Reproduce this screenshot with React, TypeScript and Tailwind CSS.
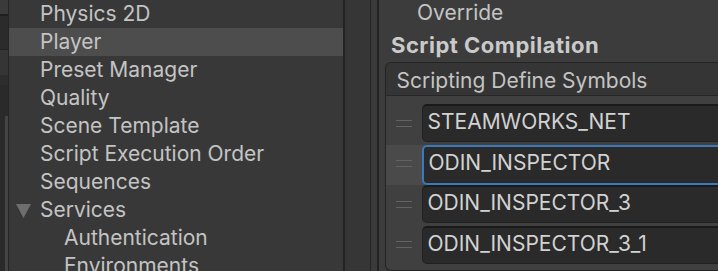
import React from "react";

const leftItems: { label: string; indent?: boolean; selected?: boolean; arrow?: boolean }[] = [
  { label: "Physics 2D" },
  { label: "Player", selected: true },
  { label: "Preset Manager" },
  { label: "Quality" },
  { label: "Scene Template" },
  { label: "Script Execution Order" },
  { label: "Sequences" },
  { label: "Services", arrow: true },
  { label: "Authentication", indent: true },
  { label: "Environments", indent: true },
];

const symbols = ["STEAMWORKS_NET", "ODIN_INSPECTOR", "ODIN_INSPECTOR_3", "ODIN_INSPECTOR_3_1"];

export default function App() {
  return (
    <div
      className="w-[718px] h-[271px] flex overflow-hidden bg-[#383838] text-[21px]"
      style={{ fontFamily: "Inter, 'Noto Sans', sans-serif" }}
    >
      {/* left remnant strip */}
      <div className="w-[8px] h-full flex flex-col shrink-0">
        <div className="h-[14px] bg-[#3a3a3a]" />
        <div className="h-[2px] bg-[#1e1e1e]" />
        <div className="h-[33px] bg-[#2b2b2b]" />
        <div className="h-[1px] bg-[#222222]" />
        <div className="h-[25px] bg-[#353535]" />
        <div className="h-[10px] bg-[#2d2d2d]" />
        <div className="flex-1 flex bg-[#2a2a2a]">
          <div className="w-[5px]" />
          <div className="w-[3px] flex flex-col">
            <div className="h-[31px]" />
            <div className="flex-1 bg-[#444444]" />
          </div>
        </div>
      </div>
      <div className="w-px h-full bg-[#252525] shrink-0" />

      {/* settings list */}
      <div className="w-[334px] h-full bg-[#383838] flex flex-col shrink-0 text-[#c4c4c4]">
        {leftItems.map((it) => (
          <div
            key={it.label}
            className={`h-[28px] shrink-0 flex items-center leading-[28px] relative ${
              it.selected ? "bg-[#4d4d4d]" : ""
            } ${it.indent ? "pl-[55px]" : "pl-[31px]"}`}
          >
            {it.arrow && (
              <svg className="absolute left-[7px] top-[8px]" width="15" height="14" viewBox="0 0 15 14">
                <polygon points="0,0 15,0 7.5,14" fill="#6e6e6e" />
              </svg>
            )}
            <span className="-mt-[1px] whitespace-nowrap">{it.label}</span>
          </div>
        ))}
      </div>

      {/* separators */}
      <div className="w-[2px] h-full bg-[#232323] shrink-0" />
      <div className="w-[25px] h-full bg-[#363636] shrink-0" />
      <div className="w-px h-full bg-[#232323] shrink-0" />
      <div className="w-[6px] h-full bg-[#3a3a3a] shrink-0" />
      <div className="w-[2px] h-full bg-[#232323] shrink-0" />

      {/* inspector */}
      <div className="flex-1 h-full bg-[#3c3c3c] flex flex-col pl-[5.5px] min-w-0">
        <div className="h-[28px] leading-[28px] pl-[32.5px] text-[#c4c4c4] whitespace-nowrap -mt-[1px]">Override</div>
        <div className="h-[28px] leading-[28px] mt-[4px] pl-[6.5px] font-bold text-[22px] tracking-[0.5px] text-[#cacaca] whitespace-nowrap">
          Script Compilation
        </div>
        <div className="mt-[3px] flex-1 rounded-t-[6px] rounded-b-[6px] border border-[#242424] border-r-0 overflow-hidden flex flex-col bg-[#404040] mr-[-10px]">
          <div className="h-[33px] leading-[33px] bg-[#353535] border-b border-[#272727] pl-[11px] pt-[1px] text-[#c4c4c4] whitespace-nowrap">
            Scripting Define Symbols
          </div>
          <div className="pt-[8px] flex flex-col">
            {symbols.map((s, i) => {
              const focused = i === 1;
              return (
                <div key={s} className={`h-[40.5px] shrink-0 flex items-start ${focused ? "bg-[#4a4a4a]" : ""}`}>
                  <div className="w-[36px] h-[38px] shrink-0 flex items-center pl-[10px]">
                    <div className="w-[16px] flex flex-col gap-[5px]">
                      <div className="h-px bg-[#626262]" />
                      <div className="h-px bg-[#626262]" />
                    </div>
                  </div>
                  <div
                    className={`flex-1 h-[38px] rounded-[5px] bg-[#2a2a2a] flex items-center pl-[5px] pb-[3px] text-[#d2d2d2] whitespace-nowrap ${
                      focused
                        ? "border-2 border-[#3a79bb] pl-[4px] h-[40px]"
                        : "border border-[#212121] border-t-[#1a1a1a] border-t-2"
                    }`}
                  >
                    {s}
                  </div>
                </div>
              );
            })}
          </div>
        </div>
      </div>
    </div>
  );
}
